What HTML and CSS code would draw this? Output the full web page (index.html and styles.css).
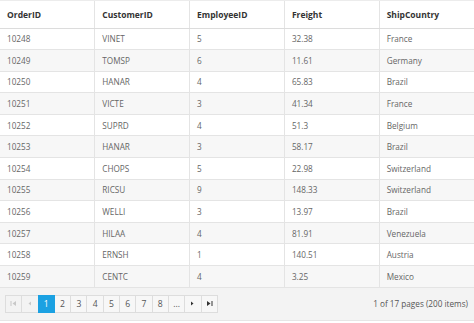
FILE: index.html
```html
<!DOCTYPE html>
<html>
<head>
<meta charset="utf-8">
<link rel="stylesheet" href="styles.css">
</head>
<body>
<div class="grid">
  <table class="table">
    <thead>
      <tr><th>OrderID</th><th>CustomerID</th><th>EmployeeID</th><th>Freight</th><th>ShipCountry</th></tr>
    </thead>
    <tbody>
      <tr><td>10248</td><td>VINET</td><td>5</td><td>32.38</td><td>France</td></tr>
      <tr class="alt"><td>10249</td><td>TOMSP</td><td>6</td><td>11.61</td><td>Germany</td></tr>
      <tr><td>10250</td><td>HANAR</td><td>4</td><td>65.83</td><td>Brazil</td></tr>
      <tr class="alt"><td>10251</td><td>VICTE</td><td>3</td><td>41.34</td><td>France</td></tr>
      <tr><td>10252</td><td>SUPRD</td><td>4</td><td>51.3</td><td>Belgium</td></tr>
      <tr class="alt"><td>10253</td><td>HANAR</td><td>3</td><td>58.17</td><td>Brazil</td></tr>
      <tr><td>10254</td><td>CHOPS</td><td>5</td><td>22.98</td><td>Switzerland</td></tr>
      <tr class="alt"><td>10255</td><td>RICSU</td><td>9</td><td>148.33</td><td>Switzerland</td></tr>
      <tr><td>10256</td><td>WELLI</td><td>3</td><td>13.97</td><td>Brazil</td></tr>
      <tr class="alt"><td>10257</td><td>HILAA</td><td>4</td><td>81.91</td><td>Venezuela</td></tr>
      <tr><td>10258</td><td>ERNSH</td><td>1</td><td>140.51</td><td>Austria</td></tr>
      <tr class="alt"><td>10259</td><td>CENTC</td><td>4</td><td>3.25</td><td>Mexico</td></tr>
    </tbody>
  </table>
  <div class="pager">
    <div class="pages">
      <span class="pbtn disabled"><svg width="7" height="7" viewBox="0 0 7 7"><rect x="0.5" y="1" width="1" height="5" fill="currentColor"/><path d="M6 1 L2.5 3.5 L6 6 Z" fill="currentColor"/></svg></span>
      <span class="pbtn disabled"><svg width="7" height="7" viewBox="0 0 7 7"><path d="M5 1.5 L2.5 3.5 L5 5.5 Z" fill="currentColor"/></svg></span>
      <span class="pbtn active">1</span>
      <span class="pbtn">2</span>
      <span class="pbtn">3</span>
      <span class="pbtn">4</span>
      <span class="pbtn">5</span>
      <span class="pbtn">6</span>
      <span class="pbtn">7</span>
      <span class="pbtn">8</span>
      <span class="pbtn">...</span>
      <span class="pbtn dark"><svg width="7" height="7" viewBox="0 0 7 7"><path d="M2 1.5 L4.5 3.5 L2 5.5 Z" fill="currentColor"/></svg></span>
      <span class="pbtn dark"><svg width="7" height="7" viewBox="0 0 7 7"><path d="M1 1 L4.5 3.5 L1 6 Z" fill="currentColor"/><rect x="5.5" y="1" width="1" height="5" fill="currentColor"/></svg></span>
    </div>
    <div class="info">1 of 17 pages (200 items)</div>
  </div>
</div>
</body>
</html>
```

FILE: styles.css
```css
html, body {
  margin: 0;
  padding: 0;
  background: #ffffff;
}
body {
  font-family: "Open Sans", "Noto Sans", sans-serif;
  width: 474px;
  height: 323px;
  overflow: hidden;
}
.grid {
  width: 474px;
  border-top: 1px solid #ececec;
}
.table {
  width: 474px;
  border-collapse: collapse;
  table-layout: fixed;
}
.table th {
  height: 27px;
  text-align: left;
  font-size: 8.5px;
  font-weight: 700;
  color: #333333;
  padding: 0 0 0 7px;
  border-right: 1px solid #e4e4e4;
  border-bottom: 1px solid #dcdcdc;
  box-sizing: border-box;
}
.table td {
  height: 21.6px;
  font-size: 8.2px;
  color: #666666;
  padding: 0 0 0 7px;
  border-right: 1px solid #e4e4e4;
  border-bottom: 1px solid #e4e4e4;
  box-sizing: border-box;
}
.table th:last-child, .table td:last-child {
  border-right: none;
}
.table tr.alt td {
  background: #f7f7f7;
}
.pager {
  display: flex;
  align-items: center;
  justify-content: space-between;
  height: 32px;
  background: #f3f3f3;
  border-bottom: 1px solid #e6e6e6;
  padding: 0 6px 0 5px;
}
.pages {
  display: flex;
}
.pbtn {
  display: flex;
  align-items: center;
  justify-content: center;
  width: 17.3px;
  height: 18px;
  box-sizing: border-box;
  border: 1px solid #dddddd;
  margin-left: -1px;
  background: #f7f7f7;
  font-size: 8.6px;
  color: #555555;
}
.pbtn:first-child {
  margin-left: 0;
}
.pbtn.disabled {
  color: #c8c8c8;
  background: #f3f3f3;
}
.pbtn.dark {
  color: #333333;
}
.pbtn.active {
  background: #1ba1e2;
  border-color: #1ba1e2;
  color: #ffffff;
  position: relative;
}
.info {
  font-size: 8.2px;
  color: #555555;
}
```
